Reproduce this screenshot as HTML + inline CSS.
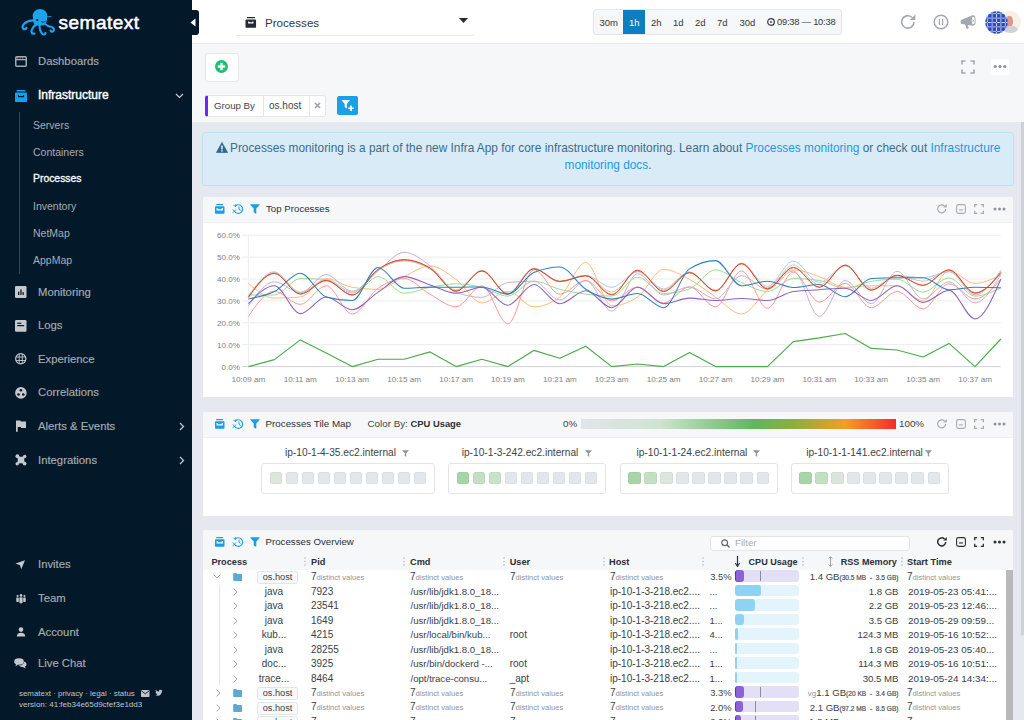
<!DOCTYPE html>
<html><head><meta charset="utf-8">
<style>
*{box-sizing:border-box}
html,body{margin:0;padding:0}
body{width:1024px;height:720px;overflow:hidden;position:relative;font-family:"Liberation Sans",sans-serif;background:#e6e8ef;color:#333}
.a{position:absolute;white-space:nowrap}
#side{position:absolute;left:0;top:0;width:192px;height:720px;background:#03192a}
.ni{position:absolute;left:38px;font-size:11.3px;color:#a8acb2;line-height:14px;-webkit-text-stroke:0.15px currentColor}
.si{position:absolute;left:33px;font-size:10.5px;color:#a8acb2;line-height:14px}
.ic{position:absolute;left:15px}
#hdr{position:absolute;left:192px;top:0;width:832px;height:44px;background:#fff;border-bottom:1px solid #e8eaef}
#tb{position:absolute;left:192px;top:44px;width:832px;height:78px;background:#f6f7f9}
.panel{position:absolute;left:203px;width:810px;background:#fff}
.ph{position:absolute;left:0;top:0;width:100%;height:25px;background:#f5f6f9}
</style></head><body>
<div id="side">
  <svg class="a" style="left:18px;top:7px" width="38" height="30" viewBox="0 0 38 30">
    <g fill="#1ea2ea" stroke="#1ea2ea" stroke-linecap="round" fill-opacity="1">
      <ellipse cx="22" cy="8.8" rx="7.4" ry="6.8" stroke="none"/>
      <path d="M15 10 Q14.5 16 17.5 18.5 L25.5 18.5 Q29.5 16 29 10 Z" stroke="none"/>
      <path d="M16.5 13.5 Q11 13 7 16 Q3.5 19 5 21.5 Q7 23 8.5 21" fill="none" stroke-width="2.2"/>
      <path d="M18.5 17 Q14.5 20 13.5 23.5 Q13 27.5 16.5 26.5" fill="none" stroke-width="2.2"/>
      <path d="M21.5 18 Q21.5 24 24.5 27 Q26.5 28.5 27.5 26" fill="none" stroke-width="2.1"/>
      <path d="M25.5 16 Q30 19.5 33.5 20 Q37 21.5 35.5 24 Q33.5 25.5 32.5 23.5" fill="none" stroke-width="2.1"/>
      <path d="M27 10 L33 9.6" fill="none" stroke-width="0.9"/>
    </g>
    <circle cx="19.3" cy="13" r="1.1" fill="#03192a"/>
    <path d="M23 14.5 Q25 16 27.5 14.5" stroke="#03192a" stroke-width="0.7" fill="none"/>
  </svg>
  <div class="a" style="left:58.5px;top:11px;font-size:19px;font-weight:400;-webkit-text-stroke:0.55px #fff;color:#fff;line-height:24px;letter-spacing:0.5px">sematext</div>

  <!-- dashboards icon -->
  <svg class="a" style="left:15px;top:56px" width="12" height="11" viewBox="0 0 12 11"><rect x="0.75" y="0.75" width="10.5" height="9.5" rx="1" fill="none" stroke="#a6aab0" stroke-width="1.5"/><rect x="0.75" y="3" width="10.5" height="1.3" fill="#a6aab0"/><rect x="2" y="1.3" width="1.2" height="1.2" fill="#a6aab0"/><rect x="4.5" y="1.3" width="1.2" height="1.2" fill="#a6aab0"/><rect x="7" y="1.3" width="1.2" height="1.2" fill="#a6aab0"/></svg>
  <div class="ni" style="top:54px">Dashboards</div>
  <!-- infra icon -->
  <svg class="a" style="left:15px;top:90px" width="12" height="12" viewBox="0 0 12 12"><rect x="1.5" y="0" width="9" height="1.4" rx="0.5" fill="#13a3ee"/><rect x="0" y="2.6" width="12" height="9.4" rx="0.8" fill="#13a3ee"/><path d="M3.5 5 L3.5 6.6 L8.5 6.6 L8.5 5" stroke="#03192a" stroke-width="1.2" fill="none"/></svg>
  <div class="ni" style="top:88px;color:#fff;font-size:12px;-webkit-text-stroke:0.4px #fff">Infrastructure</div>
  <svg class="a" style="left:175px;top:93px" width="9" height="6" viewBox="0 0 9 6"><path d="M1 1 L4.5 4.5 L8 1" stroke="#c8ccd2" stroke-width="1.2" fill="none"/></svg>
  <div class="a" style="left:19px;top:112px;width:1px;height:162px;background:#3a4654"></div>
  <div class="si" style="top:118px">Servers</div>
  <div class="si" style="top:145px">Containers</div>
  <div class="si" style="top:172px;color:#fff;font-size:10.4px;-webkit-text-stroke:0.3px #fff">Processes</div>
  <div class="si" style="top:199px">Inventory</div>
  <div class="si" style="top:226px">NetMap</div>
  <div class="si" style="top:253px">AppMap</div>
  <!-- monitoring -->
  <svg class="a" style="left:15px;top:286px" width="12" height="12" viewBox="0 0 12 12"><rect x="0" y="0" width="11.5" height="12" rx="1.2" fill="#c5c8cd"/><rect x="3" y="5.5" width="1.3" height="3.5" rx="0.6" fill="#03192a"/><rect x="5.3" y="3.3" width="1.3" height="5.7" rx="0.6" fill="#03192a"/><rect x="7.5" y="6" width="1.3" height="3" rx="0.6" fill="#03192a"/></svg>
  <div class="ni" style="top:285px">Monitoring</div>
  <!-- logs -->
  <svg class="a" style="left:15px;top:320px" width="12" height="12" viewBox="0 0 12 12"><rect x="0" y="0" width="11.5" height="11.8" rx="1.2" fill="#c5c8cd"/><rect x="2.3" y="2.7" width="4" height="1.2" fill="#03192a"/><rect x="2.3" y="5" width="6.8" height="1.2" fill="#03192a"/></svg>
  <div class="ni" style="top:318px">Logs</div>
  <!-- experience globe -->
  <svg class="a" style="left:15px;top:353px" width="12" height="12" viewBox="0 0 12 12"><circle cx="5.75" cy="5.75" r="5.1" fill="none" stroke="#c5c8cd" stroke-width="1.2"/><path d="M1 4 H10.5 M1 7.5 H10.5 M4.2 1 V10.5 M7.3 1 V10.5" stroke="#c5c8cd" stroke-width="0.9"/></svg>
  <div class="ni" style="top:352px">Experience</div>
  <!-- correlations -->
  <svg class="a" style="left:15px;top:387px" width="12" height="12" viewBox="0 0 12 12"><circle cx="5.9" cy="5.9" r="5.8" fill="#c5c8cd"/><circle cx="5.9" cy="3.3" r="1.3" fill="#03192a"/><circle cx="3.5" cy="7.5" r="1.3" fill="#03192a"/><circle cx="8.3" cy="7.5" r="1.3" fill="#03192a"/></svg>
  <div class="ni" style="top:385px">Correlations</div>
  <!-- flag -->
  <svg class="a" style="left:15px;top:420px" width="12" height="12" viewBox="0 0 12 12"><path d="M1 0.5 H5.3 L5.8 1.6 H11 V8 H6.3 L5.8 7 H2.7 V11.8 H1 Z" fill="#c5c8cd"/></svg>
  <div class="ni" style="top:419px">Alerts &amp; Events</div>
  <svg class="a" style="left:179px;top:422px" width="6" height="9" viewBox="0 0 6 9"><path d="M1 1 L4.5 4.5 L1 8" stroke="#c8ccd2" stroke-width="1.2" fill="none"/></svg>
  <!-- integrations puzzle -->
  <svg class="a" style="left:15px;top:454px" width="12" height="12" viewBox="0 0 12 12"><rect x="2.6" y="2.6" width="6.8" height="6.8" fill="#c5c8cd"/><circle cx="2.4" cy="2.2" r="1.9" fill="#c5c8cd"/><circle cx="9.7" cy="2.4" r="1.7" fill="#c5c8cd"/><circle cx="2.2" cy="9.8" r="1.7" fill="#c5c8cd"/><circle cx="9.6" cy="9.6" r="1.9" fill="#c5c8cd"/><circle cx="6" cy="1.6" r="1.1" fill="#03192a"/><circle cx="10.6" cy="6" r="1.1" fill="#03192a"/><circle cx="1.4" cy="6" r="1.1" fill="#03192a"/><circle cx="6" cy="10.5" r="1.1" fill="#03192a"/></svg>
  <div class="ni" style="top:453px">Integrations</div>
  <svg class="a" style="left:179px;top:456px" width="6" height="9" viewBox="0 0 6 9"><path d="M1 1 L4.5 4.5 L1 8" stroke="#c8ccd2" stroke-width="1.2" fill="none"/></svg>
  <!-- invites plane -->
  <svg class="a" style="left:15px;top:560px" width="11" height="10" viewBox="0 0 11 10"><path d="M0.5 3.6 L10 0.3 L6.2 9.3 L5 5.2 Z" fill="#c5c8cd"/></svg>
  <div class="ni" style="top:557px">Invites</div>
  <!-- team -->
  <svg class="a" style="left:16px;top:594px" width="10" height="10" viewBox="0 0 10 10"><circle cx="5" cy="1.4" r="1.3" fill="#c5c8cd"/><circle cx="1.6" cy="2" r="1.1" fill="#c5c8cd"/><circle cx="8.4" cy="2" r="1.1" fill="#c5c8cd"/><rect x="3.4" y="3.2" width="3.2" height="6" rx="0.8" fill="#c5c8cd"/><rect x="0.3" y="3.6" width="2.5" height="4.4" rx="0.7" fill="#c5c8cd"/><rect x="7.2" y="3.6" width="2.5" height="4.4" rx="0.7" fill="#c5c8cd"/></svg>
  <div class="ni" style="top:591px">Team</div>
  <!-- account -->
  <svg class="a" style="left:16px;top:627px" width="10" height="10" viewBox="0 0 10 10"><circle cx="5" cy="2.6" r="2.3" fill="#c5c8cd"/><path d="M0.8 9.6 Q0.8 5.8 5 5.8 Q9.2 5.8 9.2 9.6 Z" fill="#c5c8cd"/></svg>
  <div class="ni" style="top:625px">Account</div>
  <!-- chat -->
  <svg class="a" style="left:14px;top:658px" width="13" height="11" viewBox="0 0 13 11"><ellipse cx="5" cy="3.5" rx="4.8" ry="3.3" fill="#c5c8cd"/><path d="M2 6 L1.5 8.2 L4.5 6.5 Z" fill="#c5c8cd"/><path d="M10.3 3.5 Q12.8 4.5 12.6 6.5 Q12.4 8 11 8.5 L11.6 10.3 L8.5 8.9 Q6 9 4.7 7.6 Q9.5 7.4 10.3 3.5 Z" fill="#c5c8cd"/></svg>
  <div class="ni" style="top:656px">Live Chat</div>
  <div class="a" style="left:19px;top:689px;font-size:7.9px;color:#c0c4ca;line-height:10px">sematext · privacy · legal · status</div>
  <svg class="a" style="left:141px;top:690px" width="9" height="7" viewBox="0 0 9 7"><rect x="0" y="0" width="8.5" height="7" rx="0.8" fill="#c0c4ca"/><path d="M0.3 0.8 L4.25 3.8 L8.2 0.8" stroke="#03192a" stroke-width="0.9" fill="none"/></svg>
  <svg class="a" style="left:155px;top:689px" width="8" height="8" viewBox="0 0 24 24"><path fill="#c0c4ca" d="M23 4.6c-.8.4-1.7.6-2.6.7.9-.6 1.6-1.4 2-2.5-.9.5-1.9.9-2.9 1.1C18.6 3 17.4 2.4 16 2.4c-2.5 0-4.5 2-4.5 4.5 0 .4 0 .7.1 1C7.9 7.7 4.6 5.9 2.4 3.2c-.4.7-.6 1.4-.6 2.3 0 1.6.8 2.9 2 3.8-.7 0-1.4-.2-2-.6v.1c0 2.2 1.6 4 3.6 4.4-.4.1-.8.2-1.2.2-.3 0-.6 0-.8-.1.6 1.8 2.2 3.1 4.2 3.1-1.5 1.2-3.5 1.9-5.6 1.9H1c2 1.3 4.4 2 6.9 2 8.3 0 12.8-6.9 12.8-12.8v-.6c.9-.6 1.6-1.4 2.3-2.3z"/></svg>
  <div class="a" style="left:19px;top:700px;font-size:8px;color:#c0c4ca;line-height:10px">version: 41:feb34e65d9cfef3e1dd3</div>
</div>
<div class="a" style="left:186px;top:10px;width:13px;height:25px;background:#03192a;border-radius:0 3px 3px 0;z-index:5"></div>
<svg class="a" style="left:190px;top:18px;z-index:6" width="6" height="9" viewBox="0 0 6 9"><path d="M5.5 0.5 L0.5 4.5 L5.5 8.5 Z" fill="#fff"/></svg>

<div id="hdr">
  <svg class="a" style="left:53px;top:17px" width="12" height="11" viewBox="0 0 12 12"><rect x="1.5" y="0" width="9" height="1.4" rx="0.5" fill="#262a30"/><rect x="0" y="2.6" width="11.5" height="9" rx="0.8" fill="#262a30"/><path d="M3.5 4.8 L3.5 6.4 L8 6.4 L8 4.8" stroke="#fff" stroke-width="1.3" fill="none"/></svg>
  <div class="a" style="left:73px;top:16px;font-size:11.6px;color:#333840;line-height:14px">Processes</div>
  <svg class="a" style="left:267px;top:18px" width="9" height="5" viewBox="0 0 9 5"><path d="M0 0 H9 L4.5 5 Z" fill="#262a30"/></svg>
  <div class="a" style="left:44px;top:34.5px;width:238px;height:1px;background:#e6e8ee"></div>
  <!-- time picker -->
  <div class="a" style="left:401px;top:9px;width:249px;height:26px;border:1px solid #e3e6eb;border-radius:3px;background:#f6f7f9"></div>
  <div class="a" style="left:431px;top:10px;width:22px;height:24px;background:#0d7fc0"></div>
  <div class="a" style="left:407.5px;top:17px;font-size:9.5px;color:#32363c;line-height:11px">30m</div>
  <div class="a" style="left:437px;top:17px;font-size:9.5px;color:#fff;line-height:11px">1h</div>
  <div class="a" style="left:459px;top:17px;font-size:9.5px;color:#32363c;line-height:11px">2h</div>
  <div class="a" style="left:481px;top:17px;font-size:9.5px;color:#32363c;line-height:11px">1d</div>
  <div class="a" style="left:503px;top:17px;font-size:9.5px;color:#32363c;line-height:11px">2d</div>
  <div class="a" style="left:525px;top:17px;font-size:9.5px;color:#32363c;line-height:11px">7d</div>
  <div class="a" style="left:547.5px;top:17px;font-size:9.5px;color:#32363c;line-height:11px">30d</div>
  <svg class="a" style="left:574.8px;top:18.3px" width="8" height="8" viewBox="0 0 8 8"><circle cx="4" cy="4" r="3.3" fill="none" stroke="#32363c" stroke-width="1.2"/><circle cx="4" cy="4" r="0.9" fill="#32363c"/></svg>
  <div class="a" style="left:585px;top:17px;font-size:9.3px;letter-spacing:-0.2px;color:#32363c;line-height:11px">09:38 — 10:38</div>
  <!-- right icons -->
  <svg class="a" style="left:708px;top:14px" width="17" height="16" viewBox="0 0 17 16"><path d="M14 8 A6.2 6.2 0 1 1 11.8 3.2" fill="none" stroke="#a2a7b0" stroke-width="1.6"/><path d="M15.3 0.5 L15.3 6 L9.8 6 Z" fill="#a2a7b0"/></svg>
  <svg class="a" style="left:741px;top:14px" width="16" height="16" viewBox="0 0 16 16"><circle cx="8" cy="8" r="6.8" fill="none" stroke="#a2a7b0" stroke-width="1.4"/><rect x="5.8" y="5" width="1.2" height="6" fill="#a2a7b0"/><rect x="9" y="5" width="1.2" height="6" fill="#a2a7b0"/></svg>
  <svg class="a" style="left:768px;top:14px" width="17" height="16" viewBox="0 0 17 16"><path d="M1.5 5.8 Q0.5 6 0.6 8 Q0.7 9.8 1.7 10 L5 10.6 L6.5 14.3 Q7.2 15.3 8.2 14.6 L8.7 14 L7.7 10.9 L12.8 11.6 L12.8 1.3 Z" fill="#a2a7b0"/><ellipse cx="13" cy="6.45" rx="2.6" ry="5.2" fill="#a2a7b0"/><ellipse cx="13.2" cy="6.45" rx="1.5" ry="3.8" fill="#fff"/><path d="M12.6 5 L14.2 6.45 L12.6 7.9 Z" fill="#a2a7b0"/></svg>
  <!-- avatars -->
  <div class="a" style="left:808px;top:11px;width:21px;height:22px;border-radius:50%;background:#f8f0e6;overflow:hidden">
    <div class="a" style="left:6px;top:5px;width:7px;height:11px;border-radius:45%;background:#d99a8a"></div>
    <div class="a" style="left:3px;top:15px;width:15px;height:10px;border-radius:40% 40% 0 0;background:#cfd2d8"></div>
  </div>
  <svg class="a" style="left:793px;top:11px" width="23" height="23" viewBox="0 0 23 23"><defs><pattern id="pt" x="0.5" y="0.5" width="4.4" height="4.4" patternUnits="userSpaceOnUse"><rect width="4.4" height="4.4" fill="#2b4cb8"/><path d="M0 2.2 H4.4 M2.2 0 V4.4" stroke="#eef2ff" stroke-width="0.75"/><rect x="1.7" y="1.7" width="1" height="1" fill="#2b4cb8"/></pattern></defs><circle cx="11.5" cy="11.5" r="11.2" fill="url(#pt)"/></svg>
</div>
<div id="tb">
  <div class="a" style="left:13px;top:9px;width:34px;height:29px;background:#fff;border:1px solid #e5e7ec;border-radius:3px"></div>
  <svg class="a" style="left:23px;top:16px" width="13" height="13" viewBox="0 0 13 13"><circle cx="6.5" cy="6.5" r="6.5" fill="#1ebe72"/><rect x="2.8" y="5.3" width="7.4" height="2.4" fill="#fff"/><rect x="5.3" y="2.8" width="2.4" height="7.4" fill="#fff"/></svg>
  <div class="a" style="left:12.5px;top:50.5px;width:121.5px;height:22px;background:#fff;border:1px solid #e2e5ea;border-left:3px solid #6a29f5;border-radius:3px"></div>
  <div class="a" style="left:70.5px;top:51.5px;width:1px;height:20px;background:#e2e5ea"></div>
  <div class="a" style="left:116.5px;top:51.5px;width:1px;height:20px;background:#e2e5ea"></div>
  <div class="a" style="left:22px;top:56px;font-size:9.7px;color:#40454c;line-height:11px">Group By</div>
  <div class="a" style="left:77px;top:56px;font-size:10px;color:#40454c;line-height:11px">os.host</div>
  <svg class="a" style="left:122px;top:58px" width="7" height="7" viewBox="0 0 7 7"><path d="M1 1 L6 6 M6 1 L1 6" stroke="#9ba0a8" stroke-width="1.6"/></svg>
  <div class="a" style="left:145px;top:52px;width:21px;height:19px;background:#19a0e6;border-radius:2px"></div>
  <svg class="a" style="left:149px;top:55px" width="14" height="13" viewBox="0 0 14 13"><path d="M0.5 1 H9 L5.8 5 V9.5 L3.7 8 V5 Z" fill="#fff"/><path d="M10 6.5 V12 M7.3 9.25 H12.7" stroke="#fff" stroke-width="1.7"/></svg>
  <svg class="a" style="left:769px;top:16px" width="14" height="14" viewBox="0 0 14 14"><path d="M1 4.5 V1 H4.5 M9.5 1 H13 V4.5 M13 9.5 V13 H9.5 M4.5 13 H1 V9.5" fill="none" stroke="#a2a7b0" stroke-width="1.6"/></svg>
  <div class="a" style="left:799px;top:15px;width:18px;height:16px;background:#fff;border-radius:3px"></div>
  <svg class="a" style="left:801px;top:20px" width="14" height="5" viewBox="0 0 14 5"><circle cx="2.2" cy="2.5" r="1.6" fill="#8d929a"/><circle cx="7" cy="2.5" r="1.6" fill="#8d929a"/><circle cx="11.8" cy="2.5" r="1.6" fill="#8d929a"/></svg>
</div>

<div class="a" style="left:202px;top:132px;width:812px;height:54px;background:#d9ebf7;border:1px solid #c0e1f4;border-radius:3px"></div>
<svg class="a" style="left:216px;top:142px" width="12" height="11" viewBox="0 0 12 11"><path d="M6 0.3 L11.8 10.7 H0.2 Z" fill="#2d6a8e" stroke="#2d6a8e" stroke-width="0.5" stroke-linejoin="round"/><rect x="5.3" y="3.5" width="1.4" height="4" fill="#fff"/><rect x="5.3" y="8.3" width="1.4" height="1.3" fill="#fff"/></svg>
<div class="a" style="left:230px;top:140px;font-size:11.85px;line-height:16px;color:#3d6b8a">Processes monitoring is a part of the new Infra App for core infrastructure monitoring. Learn about <span style="color:#1b9ae0">Processes monitoring</span> or check out <span style="color:#1b9ae0">Infrastructure</span></div>
<div class="a" style="left:408px;width:400px;text-align:center;top:156.5px;font-size:11.85px;line-height:16px;color:#3d6b8a"><span style="color:#1b9ae0">monitoring docs</span>.</div>

<div class="a" style="left:203px;top:197px;width:810px;height:200px;background:#fff"></div>
<div class="a" style="left:203px;top:197px;width:810px;height:26px;background:#f6f7f9;border-bottom:1px solid #eceef1"></div>
<svg class="a" style="left:215px;top:204.4px" width="9.5" height="9.8" viewBox="0 0 9.5 9.8"><rect x="1.2" y="0" width="7" height="1.3" rx="0.5" fill="#1a9fe6"/><rect x="0" y="2.3" width="9.5" height="7.5" rx="0.8" fill="#1a9fe6"/><path d="M2.2 4 V5.9 H7.3 V4" stroke="#fff" stroke-width="1.2" fill="none"/></svg>
<svg class="a" style="left:232px;top:203px" width="12" height="12" viewBox="0 0 12 12"><path d="M3.2 3.2 A4.3 4.3 0 1 1 2.6 8.2" fill="none" stroke="#1a9fe6" stroke-width="1.1"/><path d="M1.5 2.2 L3.6 3.6 L4 1" fill="none" stroke="#1a9fe6" stroke-width="1"/><path d="M7 3.6 V6.3 L8.6 7.4" fill="none" stroke="#1a9fe6" stroke-width="1"/><path d="M0.6 6.4 L4 10 M4 6.4 L0.6 10" stroke="#1a9fe6" stroke-width="0.9"/></svg>
<svg class="a" style="left:250px;top:204px" width="10" height="10" viewBox="0 0 10 10"><path d="M0.8 0.2 H9.2 Q10 0.2 9.6 1 L6.3 4.6 V9.2 Q6.3 9.9 5.6 9.6 L3.9 8.6 Q3.7 8.4 3.7 8 V4.6 L0.4 1 Q0 0.2 0.8 0.2 Z" fill="#1a9fe6"/></svg>
<div class="a" style="left:266px;top:203px;font-size:9.7px;line-height:12px;color:#2b2f36">Top Processes</div>
<svg class="a" style="left:937px;top:204px" width="11" height="10" viewBox="0 0 11 10"><path d="M8.7 5 A4 4 0 1 1 7.5 2" fill="none" stroke="#a6abb3" stroke-width="1.2"/><path d="M9.8 0 V3.6 H6.2 Z" fill="#a6abb3"/></svg>
<svg class="a" style="left:956px;top:204px" width="10" height="10" viewBox="0 0 10 10"><rect x="0.6" y="0.6" width="8.8" height="8.8" rx="1.8" fill="none" stroke="#a6abb3" stroke-width="1.1"/><rect x="3" y="5.4" width="4" height="1.1" fill="#a6abb3"/></svg>
<svg class="a" style="left:974px;top:204px" width="10" height="10" viewBox="0 0 10 10"><path d="M0.7 3.2 V0.7 H3.2 M6.8 0.7 H9.3 V3.2 M9.3 6.8 V9.3 H6.8 M3.2 9.3 H0.7 V6.8" fill="none" stroke="#a6abb3" stroke-width="1.3"/></svg>
<svg class="a" style="left:993px;top:207px" width="13" height="4" viewBox="0 0 13 4"><circle cx="2" cy="2" r="1.5" fill="#8e939b"/><circle cx="6.5" cy="2" r="1.5" fill="#8e939b"/><circle cx="11" cy="2" r="1.5" fill="#8e939b"/></svg>
<svg class="a" style="left:0;top:0;z-index:2" width="1024" height="720" viewBox="0 0 1024 720" font-family="Liberation Sans" font-size="8.1" fill="#7c8087"><line x1="242" y1="366.6" x2="1000.7" y2="366.6" stroke="#cfd1d4" stroke-width="1"/><text x="240" y="369.5" text-anchor="end">0.0%</text><line x1="242" y1="344.7" x2="1000.7" y2="344.7" stroke="#ebecee" stroke-width="1"/><text x="240" y="347.6" text-anchor="end">10.0%</text><line x1="242" y1="322.8" x2="1000.7" y2="322.8" stroke="#ebecee" stroke-width="1"/><text x="240" y="325.7" text-anchor="end">20.0%</text><line x1="242" y1="300.9" x2="1000.7" y2="300.9" stroke="#ebecee" stroke-width="1"/><text x="240" y="303.8" text-anchor="end">30.0%</text><line x1="242" y1="279.0" x2="1000.7" y2="279.0" stroke="#ebecee" stroke-width="1"/><text x="240" y="281.9" text-anchor="end">40.0%</text><line x1="242" y1="257.1" x2="1000.7" y2="257.1" stroke="#ebecee" stroke-width="1"/><text x="240" y="260.0" text-anchor="end">50.0%</text><line x1="242" y1="235.2" x2="1000.7" y2="235.2" stroke="#ebecee" stroke-width="1"/><text x="240" y="238.1" text-anchor="end">60.0%</text><line x1="248.4" y1="235.2" x2="248.4" y2="366.6" stroke="#ebecee" stroke-width="1"/><text x="248.4" y="381.8" text-anchor="middle">10:09 am</text><text x="300.3" y="381.8" text-anchor="middle">10:11 am</text><text x="352.2" y="381.8" text-anchor="middle">10:13 am</text><text x="404.1" y="381.8" text-anchor="middle">10:15 am</text><text x="456.0" y="381.8" text-anchor="middle">10:17 am</text><text x="507.9" y="381.8" text-anchor="middle">10:19 am</text><text x="559.8" y="381.8" text-anchor="middle">10:21 am</text><text x="611.7" y="381.8" text-anchor="middle">10:23 am</text><text x="663.6" y="381.8" text-anchor="middle">10:25 am</text><text x="715.5" y="381.8" text-anchor="middle">10:27 am</text><text x="767.4" y="381.8" text-anchor="middle">10:29 am</text><text x="819.3" y="381.8" text-anchor="middle">10:31 am</text><text x="871.2" y="381.8" text-anchor="middle">10:33 am</text><text x="923.1" y="381.8" text-anchor="middle">10:35 am</text><text x="975.0" y="381.8" text-anchor="middle">10:37 am</text><path d="M248.4,366.6 L274.4,359.6 L300.3,339.9 L326.2,353.0 L352.2,366.6 L378.1,359.2 L404.1,359.2 L430.1,351.9 L456.0,366.6 L481.9,359.2 L507.9,366.6 L533.9,350.4 L559.8,358.3 L585.8,346.2 L611.7,366.6 L637.6,364.0 L663.6,366.6 L689.5,352.4 L715.5,366.6 L741.5,366.6 L767.4,366.6 L793.3,341.6 L819.3,337.9 L845.2,333.5 L871.2,348.4 L897.1,350.0 L923.1,357.0 L949.0,343.4 L975.0,366.6 L1000.9,339.0" fill="none" stroke="#4aab4a" stroke-width="1.15" stroke-linejoin="round"/><path d="M248.4,283.4C257.1,290.7 265.7,298.1 274.4,298.1C283.0,298.1 291.7,297.7 300.3,297.0C308.9,296.2 317.6,278.6 326.2,278.6C334.9,278.6 343.6,286.0 352.2,287.3C360.8,288.6 369.5,289.3 378.1,289.3C386.8,289.3 395.4,280.5 404.1,276.6C412.8,272.7 421.4,265.9 430.1,265.9C438.7,265.9 447.4,273.3 456.0,279.4C464.6,285.6 473.3,302.9 481.9,302.9C490.6,302.9 499.2,291.3 507.9,291.3C516.5,291.3 525.2,306.8 533.9,306.8C542.5,306.8 551.1,303.5 559.8,297.0C568.4,290.4 577.1,262.4 585.8,262.4C594.4,262.4 603.1,305.7 611.7,305.7C620.4,305.7 629.0,302.8 637.6,297.0C646.3,291.1 655.0,269.4 663.6,269.4C672.2,269.4 680.9,274.8 689.5,279.4C698.2,284.0 706.9,291.2 715.5,297.0C724.1,302.7 732.8,314.0 741.5,314.0C750.1,314.0 758.8,297.5 767.4,290.2C776.0,282.8 784.7,269.8 793.3,269.8C802.0,269.8 810.6,273.7 819.3,276.6C827.9,279.5 836.6,287.3 845.2,287.3C853.9,287.3 862.5,285.8 871.2,285.8C879.8,285.8 888.5,285.8 897.1,285.8C905.8,285.8 914.4,300.9 923.1,300.9C931.7,300.9 940.4,270.9 949.0,270.9C957.7,270.9 966.4,283.4 975.0,283.4C983.6,283.4 992.3,279.0 1000.9,274.6" fill="none" stroke="#ffbb78" stroke-width="1.0" stroke-linejoin="round"/><path d="M248.4,295.0C257.1,295.0 265.7,295.0 274.4,295.0C283.0,295.0 291.7,278.6 300.3,278.6C308.9,278.6 317.6,278.9 326.2,279.4C334.9,280.0 343.6,295.0 352.2,295.0C360.8,295.0 369.5,276.6 378.1,276.6C386.8,276.6 395.4,293.2 404.1,293.2C412.8,293.2 421.4,288.9 430.1,287.3C438.7,285.8 447.4,283.8 456.0,283.8C464.6,283.8 473.3,285.3 481.9,287.3C490.6,289.4 499.2,296.1 507.9,296.1C516.5,296.1 525.2,281.2 533.9,281.2C542.5,281.2 551.1,287.1 559.8,289.3C568.4,291.4 577.1,293.0 585.8,294.1C594.4,295.2 603.1,296.1 611.7,296.1C620.4,296.1 629.0,277.2 637.6,277.2C646.3,277.2 655.0,293.5 663.6,293.5C672.2,293.5 680.9,291.9 689.5,288.9C698.2,285.8 706.9,269.8 715.5,269.8C724.1,269.8 732.8,278.9 741.5,282.5C750.1,286.1 758.8,291.5 767.4,291.5C776.0,291.5 784.7,278.6 793.3,278.6C802.0,278.6 810.6,279.2 819.3,280.5C827.9,281.8 836.6,288.2 845.2,288.2C853.9,288.2 862.5,282.9 871.2,281.4C879.8,279.9 888.5,279.2 897.1,279.2C905.8,279.2 914.4,292.1 923.1,292.1C931.7,292.1 940.4,277.9 949.0,277.9C957.7,277.9 966.4,296.1 975.0,296.1C983.6,296.1 992.3,291.9 1000.9,287.8" fill="none" stroke="#98df8a" stroke-width="1.0" stroke-linejoin="round"/><path d="M248.4,305.7C257.1,293.8 265.7,281.8 274.4,281.8C283.0,281.8 291.7,292.8 300.3,292.8C308.9,292.8 317.6,274.6 326.2,274.6C334.9,274.6 343.6,291.3 352.2,291.3C360.8,291.3 369.5,277.4 378.1,270.9C386.8,264.4 395.4,252.3 404.1,252.3C412.8,252.3 421.4,259.2 430.1,265.9C438.7,272.5 447.4,288.6 456.0,292.1C464.6,295.6 473.3,297.4 481.9,297.4C490.6,297.4 499.2,283.4 507.9,282.5C516.5,281.6 525.2,281.2 533.9,281.2C542.5,281.2 551.1,300.0 559.8,300.0C568.4,300.0 577.1,280.5 585.8,280.5C594.4,280.5 603.1,311.0 611.7,311.0C620.4,311.0 629.0,273.7 637.6,273.7C646.3,273.7 655.0,295.0 663.6,295.0C672.2,295.0 680.9,286.9 689.5,286.9C698.2,286.9 706.9,298.9 715.5,298.9C724.1,298.9 732.8,275.7 741.5,275.7C750.1,275.7 758.8,289.3 767.4,289.3C776.0,289.3 784.7,270.9 793.3,270.9C802.0,270.9 810.6,316.4 819.3,316.4C827.9,316.4 836.6,280.5 845.2,280.5C853.9,280.5 862.5,303.7 871.2,303.7C879.8,303.7 888.5,271.3 897.1,271.3C905.8,271.3 914.4,298.9 923.1,298.9C931.7,298.9 940.4,281.8 949.0,281.8C957.7,281.8 966.4,302.9 975.0,302.9C983.6,302.9 992.3,288.7 1000.9,274.6" fill="none" stroke="#c5b0d5" stroke-width="1.0" stroke-linejoin="round"/><path d="M248.4,316.4C257.1,303.9 265.7,291.3 274.4,291.3C283.0,291.3 291.7,304.4 300.3,304.4C308.9,304.4 317.6,285.8 326.2,285.8C334.9,285.8 343.6,314.0 352.2,314.0C360.8,314.0 369.5,294.1 378.1,288.2C386.8,282.3 395.4,278.6 404.1,278.6C412.8,278.6 421.4,289.6 430.1,294.3C438.7,299.0 447.4,306.8 456.0,306.8C464.6,306.8 473.3,285.8 481.9,285.8C490.6,285.8 499.2,323.9 507.9,323.9C516.5,323.9 525.2,269.8 533.9,269.8C542.5,269.8 551.1,294.1 559.8,294.1C568.4,294.1 577.1,280.5 585.8,280.5C594.4,280.5 603.1,300.9 611.7,300.9C620.4,300.9 629.0,286.9 637.6,286.9C646.3,286.9 655.0,302.9 663.6,302.9C672.2,302.9 680.9,286.9 689.5,286.9C698.2,286.9 706.9,306.8 715.5,306.8C724.1,306.8 732.8,270.9 741.5,270.9C750.1,270.9 758.8,308.3 767.4,308.3C776.0,308.3 784.7,272.2 793.3,272.2C802.0,272.2 810.6,302.0 819.3,302.0C827.9,302.0 836.6,283.4 845.2,283.4C853.9,283.4 862.5,307.7 871.2,307.7C879.8,307.7 888.5,291.5 897.1,291.5C905.8,291.5 914.4,308.8 923.1,308.8C931.7,308.8 940.4,283.8 949.0,283.8C957.7,283.8 966.4,298.9 975.0,298.9C983.6,298.9 992.3,289.0 1000.9,279.0" fill="none" stroke="#ff9896" stroke-width="1.0" stroke-linejoin="round"/><path d="M248.4,296.1C257.1,283.9 265.7,271.8 274.4,271.8C283.0,271.8 291.7,293.2 300.3,293.2C308.9,293.2 317.6,279.4 326.2,279.4C334.9,279.4 343.6,292.1 352.2,292.1C360.8,292.1 369.5,275.0 378.1,269.8C386.8,264.6 395.4,261.0 404.1,261.0C412.8,261.0 421.4,264.3 430.1,269.1C438.7,274.0 447.4,290.0 456.0,290.0C464.6,290.0 473.3,270.2 481.9,270.2C490.6,270.2 499.2,293.2 507.9,293.2C516.5,293.2 525.2,268.1 533.9,268.1C542.5,268.1 551.1,281.2 559.8,281.2C568.4,281.2 577.1,275.3 585.8,275.3C594.4,275.3 603.1,287.3 611.7,287.3C620.4,287.3 629.0,271.8 637.6,271.8C646.3,271.8 655.0,288.9 663.6,288.9C672.2,288.9 680.9,271.8 689.5,271.8C698.2,271.8 706.9,290.2 715.5,290.2C724.1,290.2 732.8,263.0 741.5,263.0C750.1,263.0 758.8,286.4 767.4,286.4C776.0,286.4 784.7,261.0 793.3,261.0C802.0,261.0 810.6,282.5 819.3,282.5C827.9,282.5 836.6,265.9 845.2,265.9C853.9,265.9 862.5,288.2 871.2,288.2C879.8,288.2 888.5,275.7 897.1,275.7C905.8,275.7 914.4,277.7 923.1,277.7C931.7,277.7 940.4,271.8 949.0,271.8C957.7,271.8 966.4,295.0 975.0,295.0C983.6,295.0 992.3,282.6 1000.9,270.2" fill="none" stroke="#aec7e8" stroke-width="1.0" stroke-linejoin="round"/><path d="M248.4,297.6C257.1,285.0 265.7,272.4 274.4,272.4C283.0,272.4 291.7,292.1 300.3,292.1C308.9,292.1 317.6,280.1 326.2,280.1C334.9,280.1 343.6,293.2 352.2,293.2C360.8,293.2 369.5,275.7 378.1,270.2C386.8,264.8 395.4,260.4 404.1,260.4C412.8,260.4 421.4,263.5 430.1,268.5C438.7,273.5 447.4,290.6 456.0,290.6C464.6,290.6 473.3,270.5 481.9,270.5C490.6,270.5 499.2,293.7 507.9,293.7C516.5,293.7 525.2,268.5 533.9,268.5C542.5,268.5 551.1,281.8 559.8,281.8C568.4,281.8 577.1,275.5 585.8,275.5C594.4,275.5 603.1,292.1 611.7,292.1C620.4,292.1 629.0,271.1 637.6,271.1C646.3,271.1 655.0,290.2 663.6,290.2C672.2,290.2 680.9,272.4 689.5,272.4C698.2,272.4 706.9,290.4 715.5,290.4C724.1,290.4 732.8,263.5 741.5,263.5C750.1,263.5 758.8,287.8 767.4,287.8C776.0,287.8 784.7,264.8 793.3,264.8C802.0,264.8 810.6,284.9 819.3,284.9C827.9,284.9 836.6,265.4 845.2,265.4C853.9,265.4 862.5,289.3 871.2,289.3C879.8,289.3 888.5,275.5 897.1,275.5C905.8,275.5 914.4,281.2 923.1,281.2C931.7,281.2 940.4,270.9 949.0,270.9C957.7,270.9 966.4,294.3 975.0,294.3C983.6,294.3 992.3,282.8 1000.9,271.3" fill="none" stroke="#c7c7c7" stroke-width="1.0" stroke-linejoin="round"/><path d="M248.4,303.7C257.1,294.8 265.7,285.8 274.4,285.8C283.0,285.8 291.7,313.6 300.3,313.6C308.9,313.6 317.6,297.0 326.2,297.0C334.9,297.0 343.6,309.7 352.2,309.7C360.8,309.7 369.5,297.7 378.1,292.1C386.8,286.6 395.4,276.6 404.1,276.6C412.8,276.6 421.4,282.1 430.1,284.9C438.7,287.7 447.4,293.2 456.0,293.2C464.6,293.2 473.3,287.3 481.9,287.3C490.6,287.3 499.2,305.3 507.9,305.3C516.5,305.3 525.2,284.5 533.9,284.5C542.5,284.5 551.1,303.7 559.8,303.7C568.4,303.7 577.1,290.8 585.8,290.8C594.4,290.8 603.1,307.7 611.7,307.7C620.4,307.7 629.0,287.3 637.6,287.3C646.3,287.3 655.0,303.7 663.6,303.7C672.2,303.7 680.9,298.1 689.5,298.1C698.2,298.1 706.9,300.5 715.5,300.5C724.1,300.5 732.8,298.5 741.5,298.5C750.1,298.5 758.8,300.5 767.4,300.5C776.0,300.5 784.7,292.7 793.3,291.5C802.0,290.3 810.6,290.3 819.3,289.7C827.9,289.2 836.6,288.2 845.2,288.2C853.9,288.2 862.5,300.5 871.2,300.5C879.8,300.5 888.5,285.8 897.1,285.8C905.8,285.8 914.4,302.4 923.1,302.4C931.7,302.4 940.4,290.2 949.0,290.2C957.7,290.2 966.4,318.9 975.0,318.9C983.6,318.9 992.3,298.9 1000.9,279.0" fill="none" stroke="#8e62c0" stroke-width="1.05" stroke-linejoin="round"/><path d="M248.4,297.4C257.1,285.5 265.7,273.5 274.4,273.5C283.0,273.5 291.7,293.9 300.3,293.9C308.9,293.9 317.6,280.8 326.2,280.8C334.9,280.8 343.6,294.8 352.2,294.8C360.8,294.8 369.5,275.4 378.1,269.6C386.8,263.8 395.4,259.9 404.1,259.9C412.8,259.9 421.4,263.1 430.1,268.3C438.7,273.5 447.4,291.0 456.0,291.0C464.6,291.0 473.3,271.1 481.9,271.1C490.6,271.1 499.2,293.9 507.9,293.9C516.5,293.9 525.2,269.1 533.9,269.1C542.5,269.1 551.1,281.6 559.8,281.6C568.4,281.6 577.1,275.9 585.8,275.9C594.4,275.9 603.1,294.5 611.7,294.5C620.4,294.5 629.0,270.7 637.6,270.7C646.3,270.7 655.0,291.3 663.6,291.3C672.2,291.3 680.9,272.9 689.5,272.9C698.2,272.9 706.9,291.0 715.5,291.0C724.1,291.0 732.8,263.9 741.5,263.9C750.1,263.9 758.8,288.6 767.4,288.6C776.0,288.6 784.7,267.6 793.3,267.6C802.0,267.6 810.6,287.1 819.3,287.1C827.9,287.1 836.6,265.4 845.2,265.4C853.9,265.4 862.5,290.0 871.2,290.0C879.8,290.0 888.5,275.5 897.1,275.5C905.8,275.5 914.4,285.1 923.1,285.1C931.7,285.1 940.4,270.0 949.0,270.0C957.7,270.0 966.4,292.6 975.0,292.6C983.6,292.6 992.3,282.9 1000.9,273.3" fill="none" stroke="#ff7f0e" stroke-width="0.7" stroke-linejoin="round"/><path d="M248.4,297.0C257.1,285.1 265.7,273.3 274.4,273.3C283.0,273.3 291.7,294.1 300.3,294.1C308.9,294.1 317.6,280.5 326.2,280.5C334.9,280.5 343.6,295.0 352.2,295.0C360.8,295.0 369.5,275.2 378.1,269.4C386.8,263.5 395.4,259.7 404.1,259.7C412.8,259.7 421.4,262.8 430.1,268.1C438.7,273.3 447.4,291.3 456.0,291.3C464.6,291.3 473.3,270.9 481.9,270.9C490.6,270.9 499.2,294.1 507.9,294.1C516.5,294.1 525.2,268.9 533.9,268.9C542.5,268.9 551.1,281.4 559.8,281.4C568.4,281.4 577.1,275.7 585.8,275.7C594.4,275.7 603.1,294.8 611.7,294.8C620.4,294.8 629.0,270.2 637.6,270.2C646.3,270.2 655.0,291.5 663.6,291.5C672.2,291.5 680.9,272.6 689.5,272.6C698.2,272.6 706.9,290.8 715.5,290.8C724.1,290.8 732.8,263.7 741.5,263.7C750.1,263.7 758.8,288.9 767.4,288.9C776.0,288.9 784.7,267.4 793.3,267.4C802.0,267.4 810.6,287.3 819.3,287.3C827.9,287.3 836.6,265.0 845.2,265.0C853.9,265.0 862.5,290.2 871.2,290.2C879.8,290.2 888.5,275.3 897.1,275.3C905.8,275.3 914.4,285.4 923.1,285.4C931.7,285.4 940.4,269.8 949.0,269.8C957.7,269.8 966.4,293.2 975.0,293.2C983.6,293.2 992.3,282.8 1000.9,272.4" fill="none" stroke="#e0402a" stroke-width="1.0" stroke-linejoin="round"/><path d="M248.4,298.9C257.1,297.3 265.7,295.8 274.4,291.5C283.0,287.2 291.7,273.3 300.3,273.3C308.9,273.3 317.6,294.6 326.2,297.0C334.9,299.3 343.6,300.5 352.2,300.5C360.8,300.5 369.5,267.4 378.1,267.4C386.8,267.4 395.4,288.2 404.1,288.2C412.8,288.2 421.4,287.1 430.1,287.1C438.7,287.1 447.4,287.3 456.0,287.3C464.6,287.3 473.3,286.9 481.9,286.9C490.6,286.9 499.2,294.1 507.9,294.1C516.5,294.1 525.2,276.4 533.9,272.6C542.5,268.9 551.1,267.0 559.8,267.0C568.4,267.0 577.1,283.9 585.8,289.3C594.4,294.7 603.1,299.1 611.7,299.1C620.4,299.1 629.0,293.5 637.6,293.5C646.3,293.5 655.0,307.7 663.6,307.7C672.2,307.7 680.9,274.5 689.5,268.9C698.2,263.4 706.9,260.6 715.5,260.6C724.1,260.6 732.8,285.8 741.5,285.8C750.1,285.8 758.8,281.2 767.4,281.2C776.0,281.2 784.7,287.5 793.3,287.5C802.0,287.5 810.6,284.5 819.3,284.5C827.9,284.5 836.6,296.7 845.2,296.7C853.9,296.7 862.5,279.1 871.2,278.6C879.8,278.0 888.5,277.7 897.1,277.7C905.8,277.7 914.4,277.7 923.1,277.7C931.7,277.7 940.4,289.7 949.0,289.7C957.7,289.7 966.4,287.3 975.0,287.3C983.6,287.3 992.3,287.5 1000.9,287.8" fill="none" stroke="#2f80bf" stroke-width="1.05" stroke-linejoin="round"/></svg>
<div class="a" style="left:203px;top:412px;width:810px;height:104px;background:#fff"></div>
<div class="a" style="left:203px;top:412px;width:810px;height:26px;background:#f6f7f9;border-bottom:1px solid #eceef1"></div>
<svg class="a" style="left:215px;top:419.4px" width="9.5" height="9.8" viewBox="0 0 9.5 9.8"><rect x="1.2" y="0" width="7" height="1.3" rx="0.5" fill="#1a9fe6"/><rect x="0" y="2.3" width="9.5" height="7.5" rx="0.8" fill="#1a9fe6"/><path d="M2.2 4 V5.9 H7.3 V4" stroke="#fff" stroke-width="1.2" fill="none"/></svg>
<svg class="a" style="left:232px;top:418px" width="12" height="12" viewBox="0 0 12 12"><path d="M3.2 3.2 A4.3 4.3 0 1 1 2.6 8.2" fill="none" stroke="#1a9fe6" stroke-width="1.1"/><path d="M1.5 2.2 L3.6 3.6 L4 1" fill="none" stroke="#1a9fe6" stroke-width="1"/><path d="M7 3.6 V6.3 L8.6 7.4" fill="none" stroke="#1a9fe6" stroke-width="1"/><path d="M0.6 6.4 L4 10 M4 6.4 L0.6 10" stroke="#1a9fe6" stroke-width="0.9"/></svg>
<svg class="a" style="left:250px;top:419px" width="10" height="10" viewBox="0 0 10 10"><path d="M0.8 0.2 H9.2 Q10 0.2 9.6 1 L6.3 4.6 V9.2 Q6.3 9.9 5.6 9.6 L3.9 8.6 Q3.7 8.4 3.7 8 V4.6 L0.4 1 Q0 0.2 0.8 0.2 Z" fill="#1a9fe6"/></svg>
<div class="a" style="left:265.5px;top:418px;font-size:9.8px;line-height:12px;color:#2b2f36">Processes Tile Map</div>
<div class="a" style="left:367.5px;top:418px;font-size:9.8px;line-height:12px;color:#40444b">Color By: <b style="color:#2b2f36;font-size:9.4px">CPU Usage</b></div>
<div class="a" style="left:563px;top:418px;font-size:9.8px;line-height:12px;color:#40444b">0%</div>
<div class="a" style="left:581px;top:419px;width:315px;height:10px;background:linear-gradient(90deg,#e1e5ea 0%,#cfe3cf 25%,#5fb65f 55%,#8fae3c 68%,#f59d23 84%,#f42b2b 100%)"></div>
<div class="a" style="left:899px;top:418px;font-size:9.8px;line-height:12px;color:#40444b">100%</div>
<svg class="a" style="left:937px;top:419px" width="11" height="10" viewBox="0 0 11 10"><path d="M8.7 5 A4 4 0 1 1 7.5 2" fill="none" stroke="#a6abb3" stroke-width="1.2"/><path d="M9.8 0 V3.6 H6.2 Z" fill="#a6abb3"/></svg>
<svg class="a" style="left:956px;top:419px" width="10" height="10" viewBox="0 0 10 10"><rect x="0.6" y="0.6" width="8.8" height="8.8" rx="1.8" fill="none" stroke="#a6abb3" stroke-width="1.1"/><rect x="3" y="5.4" width="4" height="1.1" fill="#a6abb3"/></svg>
<svg class="a" style="left:974px;top:419px" width="10" height="10" viewBox="0 0 10 10"><path d="M0.7 3.2 V0.7 H3.2 M6.8 0.7 H9.3 V3.2 M9.3 6.8 V9.3 H6.8 M3.2 9.3 H0.7 V6.8" fill="none" stroke="#a6abb3" stroke-width="1.3"/></svg>
<svg class="a" style="left:993px;top:422px" width="13" height="4" viewBox="0 0 13 4"><circle cx="2" cy="2" r="1.5" fill="#8e939b"/><circle cx="6.5" cy="2" r="1.5" fill="#8e939b"/><circle cx="11" cy="2" r="1.5" fill="#8e939b"/></svg>
<div class="a" style="left:261px;top:463px;width:174px;height:30.5px;border:1px solid #e2e4e8;border-radius:3px;background:#fff"></div>
<div class="a" style="left:285px;top:446px;font-size:10.2px;line-height:13px;color:#3e4249">ip-10-1-4-35.ec2.internal</div>
<svg class="a" style="left:402.3px;top:449.5px" width="7" height="7" viewBox="0 0 7 7"><path d="M0 0.2 H7 L4.2 3.2 V6.8 L2.8 5.9 V3.2 Z" fill="#8f949b"/></svg>
<div class="a" style="left:269.8px;top:472px;width:12.3px;height:12.3px;border-radius:2.5px;background:#dde5df;box-shadow:inset 0 0 0 0.6px rgba(0,0,0,0.06)"></div>
<div class="a" style="left:285.8px;top:472px;width:12.3px;height:12.3px;border-radius:2.5px;background:#e3e6ea;box-shadow:inset 0 0 0 0.6px rgba(0,0,0,0.06)"></div>
<div class="a" style="left:301.8px;top:472px;width:12.3px;height:12.3px;border-radius:2.5px;background:#e3e6ea;box-shadow:inset 0 0 0 0.6px rgba(0,0,0,0.06)"></div>
<div class="a" style="left:317.9px;top:472px;width:12.3px;height:12.3px;border-radius:2.5px;background:#e3e6ea;box-shadow:inset 0 0 0 0.6px rgba(0,0,0,0.06)"></div>
<div class="a" style="left:333.9px;top:472px;width:12.3px;height:12.3px;border-radius:2.5px;background:#e3e6ea;box-shadow:inset 0 0 0 0.6px rgba(0,0,0,0.06)"></div>
<div class="a" style="left:349.9px;top:472px;width:12.3px;height:12.3px;border-radius:2.5px;background:#e3e6ea;box-shadow:inset 0 0 0 0.6px rgba(0,0,0,0.06)"></div>
<div class="a" style="left:365.9px;top:472px;width:12.3px;height:12.3px;border-radius:2.5px;background:#e3e6ea;box-shadow:inset 0 0 0 0.6px rgba(0,0,0,0.06)"></div>
<div class="a" style="left:381.9px;top:472px;width:12.3px;height:12.3px;border-radius:2.5px;background:#e3e6ea;box-shadow:inset 0 0 0 0.6px rgba(0,0,0,0.06)"></div>
<div class="a" style="left:398.0px;top:472px;width:12.3px;height:12.3px;border-radius:2.5px;background:#e3e6ea;box-shadow:inset 0 0 0 0.6px rgba(0,0,0,0.06)"></div>
<div class="a" style="left:414.0px;top:472px;width:12.3px;height:12.3px;border-radius:2.5px;background:#e3e6ea;box-shadow:inset 0 0 0 0.6px rgba(0,0,0,0.06)"></div>
<div class="a" style="left:448px;top:463px;width:158px;height:30.5px;border:1px solid #e2e4e8;border-radius:3px;background:#fff"></div>
<div class="a" style="left:461.7px;top:446px;font-size:10.2px;line-height:13px;color:#3e4249">ip-10-1-3-242.ec2.internal</div>
<svg class="a" style="left:584.7px;top:449.5px" width="7" height="7" viewBox="0 0 7 7"><path d="M0 0.2 H7 L4.2 3.2 V6.8 L2.8 5.9 V3.2 Z" fill="#8f949b"/></svg>
<div class="a" style="left:456.8px;top:472px;width:12.3px;height:12.3px;border-radius:2.5px;background:#a8d5a8;box-shadow:inset 0 0 0 0.6px rgba(0,0,0,0.06)"></div>
<div class="a" style="left:472.8px;top:472px;width:12.3px;height:12.3px;border-radius:2.5px;background:#c3e0c3;box-shadow:inset 0 0 0 0.6px rgba(0,0,0,0.06)"></div>
<div class="a" style="left:488.8px;top:472px;width:12.3px;height:12.3px;border-radius:2.5px;background:#c8e2c8;box-shadow:inset 0 0 0 0.6px rgba(0,0,0,0.06)"></div>
<div class="a" style="left:504.9px;top:472px;width:12.3px;height:12.3px;border-radius:2.5px;background:#e3e6ea;box-shadow:inset 0 0 0 0.6px rgba(0,0,0,0.06)"></div>
<div class="a" style="left:520.9px;top:472px;width:12.3px;height:12.3px;border-radius:2.5px;background:#e3e6ea;box-shadow:inset 0 0 0 0.6px rgba(0,0,0,0.06)"></div>
<div class="a" style="left:536.9px;top:472px;width:12.3px;height:12.3px;border-radius:2.5px;background:#e3e6ea;box-shadow:inset 0 0 0 0.6px rgba(0,0,0,0.06)"></div>
<div class="a" style="left:552.9px;top:472px;width:12.3px;height:12.3px;border-radius:2.5px;background:#e3e6ea;box-shadow:inset 0 0 0 0.6px rgba(0,0,0,0.06)"></div>
<div class="a" style="left:568.9px;top:472px;width:12.3px;height:12.3px;border-radius:2.5px;background:#e3e6ea;box-shadow:inset 0 0 0 0.6px rgba(0,0,0,0.06)"></div>
<div class="a" style="left:585.0px;top:472px;width:12.3px;height:12.3px;border-radius:2.5px;background:#e3e6ea;box-shadow:inset 0 0 0 0.6px rgba(0,0,0,0.06)"></div>
<div class="a" style="left:619.5px;top:463px;width:158px;height:30.5px;border:1px solid #e2e4e8;border-radius:3px;background:#fff"></div>
<div class="a" style="left:636.4px;top:446px;font-size:10.2px;line-height:13px;color:#3e4249">ip-10-1-1-24.ec2.internal</div>
<svg class="a" style="left:752.8px;top:449.5px" width="7" height="7" viewBox="0 0 7 7"><path d="M0 0.2 H7 L4.2 3.2 V6.8 L2.8 5.9 V3.2 Z" fill="#8f949b"/></svg>
<div class="a" style="left:628.3px;top:472px;width:12.3px;height:12.3px;border-radius:2.5px;background:#a8d5a8;box-shadow:inset 0 0 0 0.6px rgba(0,0,0,0.06)"></div>
<div class="a" style="left:644.3px;top:472px;width:12.3px;height:12.3px;border-radius:2.5px;background:#c3e0c3;box-shadow:inset 0 0 0 0.6px rgba(0,0,0,0.06)"></div>
<div class="a" style="left:660.3px;top:472px;width:12.3px;height:12.3px;border-radius:2.5px;background:#dde5df;box-shadow:inset 0 0 0 0.6px rgba(0,0,0,0.06)"></div>
<div class="a" style="left:676.4px;top:472px;width:12.3px;height:12.3px;border-radius:2.5px;background:#e3e6ea;box-shadow:inset 0 0 0 0.6px rgba(0,0,0,0.06)"></div>
<div class="a" style="left:692.4px;top:472px;width:12.3px;height:12.3px;border-radius:2.5px;background:#e3e6ea;box-shadow:inset 0 0 0 0.6px rgba(0,0,0,0.06)"></div>
<div class="a" style="left:708.4px;top:472px;width:12.3px;height:12.3px;border-radius:2.5px;background:#e3e6ea;box-shadow:inset 0 0 0 0.6px rgba(0,0,0,0.06)"></div>
<div class="a" style="left:724.4px;top:472px;width:12.3px;height:12.3px;border-radius:2.5px;background:#e3e6ea;box-shadow:inset 0 0 0 0.6px rgba(0,0,0,0.06)"></div>
<div class="a" style="left:740.4px;top:472px;width:12.3px;height:12.3px;border-radius:2.5px;background:#e3e6ea;box-shadow:inset 0 0 0 0.6px rgba(0,0,0,0.06)"></div>
<div class="a" style="left:756.5px;top:472px;width:12.3px;height:12.3px;border-radius:2.5px;background:#e3e6ea;box-shadow:inset 0 0 0 0.6px rgba(0,0,0,0.06)"></div>
<div class="a" style="left:790.5px;top:463px;width:158px;height:30.5px;border:1px solid #e2e4e8;border-radius:3px;background:#fff"></div>
<div class="a" style="left:806.2px;top:446px;font-size:10.2px;line-height:13px;color:#3e4249">ip-10-1-1-141.ec2.internal</div>
<svg class="a" style="left:924.8px;top:449.5px" width="7" height="7" viewBox="0 0 7 7"><path d="M0 0.2 H7 L4.2 3.2 V6.8 L2.8 5.9 V3.2 Z" fill="#8f949b"/></svg>
<div class="a" style="left:799.3px;top:472px;width:12.3px;height:12.3px;border-radius:2.5px;background:#a8d5a8;box-shadow:inset 0 0 0 0.6px rgba(0,0,0,0.06)"></div>
<div class="a" style="left:815.3px;top:472px;width:12.3px;height:12.3px;border-radius:2.5px;background:#c3e0c3;box-shadow:inset 0 0 0 0.6px rgba(0,0,0,0.06)"></div>
<div class="a" style="left:831.3px;top:472px;width:12.3px;height:12.3px;border-radius:2.5px;background:#dbe4dd;box-shadow:inset 0 0 0 0.6px rgba(0,0,0,0.06)"></div>
<div class="a" style="left:847.4px;top:472px;width:12.3px;height:12.3px;border-radius:2.5px;background:#e3e6ea;box-shadow:inset 0 0 0 0.6px rgba(0,0,0,0.06)"></div>
<div class="a" style="left:863.4px;top:472px;width:12.3px;height:12.3px;border-radius:2.5px;background:#e3e6ea;box-shadow:inset 0 0 0 0.6px rgba(0,0,0,0.06)"></div>
<div class="a" style="left:879.4px;top:472px;width:12.3px;height:12.3px;border-radius:2.5px;background:#e3e6ea;box-shadow:inset 0 0 0 0.6px rgba(0,0,0,0.06)"></div>
<div class="a" style="left:895.4px;top:472px;width:12.3px;height:12.3px;border-radius:2.5px;background:#e3e6ea;box-shadow:inset 0 0 0 0.6px rgba(0,0,0,0.06)"></div>
<div class="a" style="left:911.4px;top:472px;width:12.3px;height:12.3px;border-radius:2.5px;background:#e3e6ea;box-shadow:inset 0 0 0 0.6px rgba(0,0,0,0.06)"></div>
<div class="a" style="left:927.5px;top:472px;width:12.3px;height:12.3px;border-radius:2.5px;background:#e3e6ea;box-shadow:inset 0 0 0 0.6px rgba(0,0,0,0.06)"></div>
<!--FILTERICONS-->
<div class="a" style="left:203px;top:530px;width:810px;height:190px;background:#fff"></div>
<div class="a" style="left:203px;top:530px;width:810px;height:40px;background:#f6f7f9"></div>
<svg class="a" style="left:215px;top:537.4px" width="9.5" height="9.8" viewBox="0 0 9.5 9.8"><rect x="1.2" y="0" width="7" height="1.3" rx="0.5" fill="#1a9fe6"/><rect x="0" y="2.3" width="9.5" height="7.5" rx="0.8" fill="#1a9fe6"/><path d="M2.2 4 V5.9 H7.3 V4" stroke="#fff" stroke-width="1.2" fill="none"/></svg>
<svg class="a" style="left:232px;top:536px" width="12" height="12" viewBox="0 0 12 12"><path d="M3.2 3.2 A4.3 4.3 0 1 1 2.6 8.2" fill="none" stroke="#1a9fe6" stroke-width="1.1"/><path d="M1.5 2.2 L3.6 3.6 L4 1" fill="none" stroke="#1a9fe6" stroke-width="1"/><path d="M7 3.6 V6.3 L8.6 7.4" fill="none" stroke="#1a9fe6" stroke-width="1"/><path d="M0.6 6.4 L4 10 M4 6.4 L0.6 10" stroke="#1a9fe6" stroke-width="0.9"/></svg>
<svg class="a" style="left:250px;top:537px" width="10" height="10" viewBox="0 0 10 10"><path d="M0.8 0.2 H9.2 Q10 0.2 9.6 1 L6.3 4.6 V9.2 Q6.3 9.9 5.6 9.6 L3.9 8.6 Q3.7 8.4 3.7 8 V4.6 L0.4 1 Q0 0.2 0.8 0.2 Z" fill="#1a9fe6"/></svg>
<div class="a" style="left:265.5px;top:536px;font-size:9.7px;line-height:12px;color:#2b2f36">Processes Overview</div>
<div class="a" style="left:710px;top:536px;width:200px;height:15px;border:1px solid #e2e4e8;border-radius:3px;background:#fff"></div>
<svg class="a" style="left:721px;top:539px" width="9" height="9" viewBox="0 0 9 9"><circle cx="3.7" cy="3.7" r="2.9" fill="none" stroke="#5d636b" stroke-width="1.2"/><path d="M5.8 5.8 L8.5 8.5" stroke="#5d636b" stroke-width="1.3"/></svg>
<div class="a" style="left:735px;top:537px;font-size:9.7px;line-height:12px;color:#a9adb3">Filter</div>
<svg class="a" style="left:937px;top:537px" width="11" height="10" viewBox="0 0 11 10"><path d="M8.7 5 A4 4 0 1 1 7.5 2" fill="none" stroke="#2b2f36" stroke-width="1.5"/><path d="M9.8 0 V3.6 H6.2 Z" fill="#2b2f36"/></svg>
<svg class="a" style="left:956px;top:537px" width="10" height="10" viewBox="0 0 10 10"><rect x="0.6" y="0.6" width="8.8" height="8.8" rx="1.8" fill="none" stroke="#2b2f36" stroke-width="1.1"/><rect x="3" y="5.4" width="4" height="1.1" fill="#2b2f36"/></svg>
<svg class="a" style="left:974px;top:537px" width="10" height="10" viewBox="0 0 10 10"><path d="M0.7 3.2 V0.7 H3.2 M6.8 0.7 H9.3 V3.2 M9.3 6.8 V9.3 H6.8 M3.2 9.3 H0.7 V6.8" fill="none" stroke="#2b2f36" stroke-width="1.3"/></svg>
<svg class="a" style="left:993px;top:540px" width="13" height="4" viewBox="0 0 13 4"><circle cx="2" cy="2" r="1.5" fill="#2b2f36"/><circle cx="6.5" cy="2" r="1.5" fill="#2b2f36"/><circle cx="11" cy="2" r="1.5" fill="#2b2f36"/></svg>
<div class="a" style="left:211.4px;top:555.6px;font-size:9.2px;font-weight:700;line-height:12px;color:#2b2f36">Process</div>
<div class="a" style="left:311px;top:555.6px;font-size:9.2px;font-weight:700;line-height:12px;color:#2b2f36">Pid</div>
<div class="a" style="left:410px;top:555.6px;font-size:9.2px;font-weight:700;line-height:12px;color:#2b2f36">Cmd</div>
<div class="a" style="left:509.7px;top:555.6px;font-size:9.2px;font-weight:700;line-height:12px;color:#2b2f36">User</div>
<div class="a" style="left:609px;top:555.6px;font-size:9.2px;font-weight:700;line-height:12px;color:#2b2f36">Host</div>
<div class="a" style="left:748.5px;top:555.6px;font-size:9.1px;font-weight:700;line-height:12px;color:#2b2f36">CPU Usage</div>
<div class="a" style="left:840.7px;top:555.6px;font-size:9.1px;font-weight:700;line-height:12px;color:#2b2f36">RSS Memory</div>
<div class="a" style="left:907px;top:555.6px;font-size:9.2px;font-weight:700;line-height:12px;color:#2b2f36">Start Time</div>
<svg class="a" style="left:304.3px;top:557px" width="2" height="9" viewBox="0 0 2 9"><circle cx="1" cy="1" r="0.7" fill="#a5a9b0"/><circle cx="1" cy="4.5" r="0.7" fill="#a5a9b0"/><circle cx="1" cy="8" r="0.7" fill="#a5a9b0"/></svg>
<svg class="a" style="left:403.3px;top:557px" width="2" height="9" viewBox="0 0 2 9"><circle cx="1" cy="1" r="0.7" fill="#a5a9b0"/><circle cx="1" cy="4.5" r="0.7" fill="#a5a9b0"/><circle cx="1" cy="8" r="0.7" fill="#a5a9b0"/></svg>
<svg class="a" style="left:503px;top:557px" width="2" height="9" viewBox="0 0 2 9"><circle cx="1" cy="1" r="0.7" fill="#a5a9b0"/><circle cx="1" cy="4.5" r="0.7" fill="#a5a9b0"/><circle cx="1" cy="8" r="0.7" fill="#a5a9b0"/></svg>
<svg class="a" style="left:602.5px;top:557px" width="2" height="9" viewBox="0 0 2 9"><circle cx="1" cy="1" r="0.7" fill="#a5a9b0"/><circle cx="1" cy="4.5" r="0.7" fill="#a5a9b0"/><circle cx="1" cy="8" r="0.7" fill="#a5a9b0"/></svg>
<svg class="a" style="left:702px;top:557px" width="2" height="9" viewBox="0 0 2 9"><circle cx="1" cy="1" r="0.7" fill="#a5a9b0"/><circle cx="1" cy="4.5" r="0.7" fill="#a5a9b0"/><circle cx="1" cy="8" r="0.7" fill="#a5a9b0"/></svg>
<svg class="a" style="left:802.3px;top:557px" width="2" height="9" viewBox="0 0 2 9"><circle cx="1" cy="1" r="0.7" fill="#a5a9b0"/><circle cx="1" cy="4.5" r="0.7" fill="#a5a9b0"/><circle cx="1" cy="8" r="0.7" fill="#a5a9b0"/></svg>
<svg class="a" style="left:901px;top:557px" width="2" height="9" viewBox="0 0 2 9"><circle cx="1" cy="1" r="0.7" fill="#a5a9b0"/><circle cx="1" cy="4.5" r="0.7" fill="#a5a9b0"/><circle cx="1" cy="8" r="0.7" fill="#a5a9b0"/></svg>
<svg class="a" style="left:735px;top:556px" width="5" height="11" viewBox="0 0 5 11"><path d="M2.5 0 V9.5" stroke="#2b2f36" stroke-width="1.2"/><path d="M0.3 7 L2.5 10.5 L4.7 7" fill="none" stroke="#2b2f36" stroke-width="1.1"/></svg>
<svg class="a" style="left:828px;top:556px" width="5" height="11" viewBox="0 0 5 11"><path d="M2.5 1 V10" stroke="#9ea3aa" stroke-width="1"/><path d="M0.6 2.6 L2.5 0.5 L4.4 2.6 M0.6 8.4 L2.5 10.5 L4.4 8.4" fill="none" stroke="#9ea3aa" stroke-width="0.9"/></svg>
<svg class="a" style="left:213px;top:574.2px" width="8" height="5" viewBox="0 0 8 5"><path d="M0.7 0.7 L4 4 L7.3 0.7" fill="none" stroke="#9ea3aa" stroke-width="1"/></svg>
<svg class="a" style="left:233.3px;top:573.4000000000001px" width="9.2" height="8" viewBox="0 0 10 9"><path d="M0 1 Q0 0 1 0 H3.6 L4.6 1.2 H9 Q10 1.2 10 2.2 V8 Q10 9 9 9 H1 Q0 9 0 8 Z" fill="#5ea8d6"/></svg>
<div class="a" style="left:257px;top:571.4000000000001px;width:41px;height:13px;border:1px solid #e2e4e8;border-radius:2.5px;background:#f8f9fa;font-size:9.2px;line-height:11px;text-align:center;color:#3a3e45">os.host</div>
<div class="a" style="left:311px;top:569.7px;line-height:13px;font-size:10px;color:#3a3e45">7<span style="font-size:7.6px;color:#8f949b">distinct values</span></div>
<div class="a" style="left:410px;top:569.7px;line-height:13px;font-size:10px;color:#3a3e45">7<span style="font-size:7.6px;color:#8f949b">distinct values</span></div>
<div class="a" style="left:510px;top:569.7px;line-height:13px;font-size:10px;color:#3a3e45">7<span style="font-size:7.6px;color:#8f949b">distinct values</span></div>
<div class="a" style="left:610px;top:569.7px;line-height:13px;font-size:10px;color:#3a3e45">7<span style="font-size:7.6px;color:#8f949b">distinct values</span></div>
<div class="a" style="left:690px;width:41.5px;text-align:right;top:570.2px;line-height:13px;font-size:9.4px;color:#3a3e45">3.5%</div>
<div class="a" style="left:735px;top:570.4000000000001px;width:64px;height:11.5px;border-radius:3px;background:#e3dff6"></div>
<div class="a" style="left:735px;top:570.4000000000001px;width:8.5px;height:11.5px;border-radius:3px;background:#8b63d5;border-left:1.5px solid #5a3aa0"></div>
<div class="a" style="left:759.8px;top:570.9000000000001px;width:1px;height:10.5px;background:#8a8e96"></div>
<div class="a" style="left:700px;width:198.5px;text-align:right;top:570.2px;line-height:13px;font-size:9.6px;color:#3a3e45"><span style="font-size:8px;color:#8f949b"></span>1.4 GB<span style="font-size:6.6px;color:#50545b;-webkit-text-stroke:0.2px #50545b">(30.5 MB &nbsp;-&nbsp; 3.5 GB)</span></div>
<div class="a" style="left:907px;top:569.7px;line-height:13px;font-size:10px;color:#3a3e45">7<span style="font-size:7.6px;color:#8f949b">distinct values</span></div>
<svg class="a" style="left:232.5px;top:587.7px" width="5" height="8" viewBox="0 0 5 8"><path d="M0.7 0.7 L4 4 L0.7 7.3" fill="none" stroke="#a8adb4" stroke-width="1"/></svg>
<div class="a" style="left:244px;width:60px;text-align:center;top:584.7px;line-height:13px;font-size:10px;color:#3a3e45">java</div>
<div class="a" style="left:311px;top:584.7px;line-height:13px;font-size:10px;color:#3a3e45">7923</div>
<div class="a" style="left:410.5px;top:584.7px;line-height:13px;font-size:9.6px;color:#3a3e45">/usr/lib/jdk1.8.0_18...</div>
<div class="a" style="left:610px;top:584.7px;line-height:13px;font-size:10px;color:#3a3e45">ip-10-1-3-218.ec2....</div>
<div class="a" style="left:709.5px;top:584.7px;line-height:13px;font-size:9.5px;color:#3a3e45">...</div>
<div class="a" style="left:735px;top:584.9000000000001px;width:64px;height:11.5px;border-radius:3px;background:#e4f4fc"></div>
<div class="a" style="left:735px;top:584.9000000000001px;width:25.5px;height:11.5px;border-radius:3px;background:#8fd2f3"></div>
<div class="a" style="left:798px;width:100.5px;text-align:right;top:584.7px;line-height:13px;font-size:9.6px;color:#3a3e45">1.8 GB</div>
<div class="a" style="left:908px;top:584.7px;line-height:13px;font-size:9.9px;color:#3a3e45">2019-05-23 05:41:...</div>
<svg class="a" style="left:232.5px;top:602.2px" width="5" height="8" viewBox="0 0 5 8"><path d="M0.7 0.7 L4 4 L0.7 7.3" fill="none" stroke="#a8adb4" stroke-width="1"/></svg>
<div class="a" style="left:244px;width:60px;text-align:center;top:599.2px;line-height:13px;font-size:10px;color:#3a3e45">java</div>
<div class="a" style="left:311px;top:599.2px;line-height:13px;font-size:10px;color:#3a3e45">23541</div>
<div class="a" style="left:410.5px;top:599.2px;line-height:13px;font-size:9.6px;color:#3a3e45">/usr/lib/jdk1.8.0_18...</div>
<div class="a" style="left:610px;top:599.2px;line-height:13px;font-size:10px;color:#3a3e45">ip-10-1-3-218.ec2....</div>
<div class="a" style="left:709.5px;top:599.2px;line-height:13px;font-size:9.5px;color:#3a3e45">...</div>
<div class="a" style="left:735px;top:599.4000000000001px;width:64px;height:11.5px;border-radius:3px;background:#e4f4fc"></div>
<div class="a" style="left:735px;top:599.4000000000001px;width:19.7px;height:11.5px;border-radius:3px;background:#8fd2f3"></div>
<div class="a" style="left:798px;width:100.5px;text-align:right;top:599.2px;line-height:13px;font-size:9.6px;color:#3a3e45">2.2 GB</div>
<div class="a" style="left:908px;top:599.2px;line-height:13px;font-size:9.9px;color:#3a3e45">2019-05-23 12:46:...</div>
<svg class="a" style="left:232.5px;top:616.7px" width="5" height="8" viewBox="0 0 5 8"><path d="M0.7 0.7 L4 4 L0.7 7.3" fill="none" stroke="#a8adb4" stroke-width="1"/></svg>
<div class="a" style="left:244px;width:60px;text-align:center;top:613.7px;line-height:13px;font-size:10px;color:#3a3e45">java</div>
<div class="a" style="left:311px;top:613.7px;line-height:13px;font-size:10px;color:#3a3e45">1649</div>
<div class="a" style="left:410.5px;top:613.7px;line-height:13px;font-size:9.6px;color:#3a3e45">/usr/lib/jdk1.8.0_18...</div>
<div class="a" style="left:610px;top:613.7px;line-height:13px;font-size:10px;color:#3a3e45">ip-10-1-3-218.ec2....</div>
<div class="a" style="left:709.5px;top:613.7px;line-height:13px;font-size:9.5px;color:#3a3e45">1...</div>
<div class="a" style="left:735px;top:613.9000000000001px;width:64px;height:11.5px;border-radius:3px;background:#e4f4fc"></div>
<div class="a" style="left:735px;top:613.9000000000001px;width:9px;height:11.5px;border-radius:3px;background:#8fd2f3"></div>
<div class="a" style="left:798px;width:100.5px;text-align:right;top:613.7px;line-height:13px;font-size:9.6px;color:#3a3e45">3.5 GB</div>
<div class="a" style="left:908px;top:613.7px;line-height:13px;font-size:9.9px;color:#3a3e45">2019-05-29 09:59...</div>
<svg class="a" style="left:232.5px;top:631.2px" width="5" height="8" viewBox="0 0 5 8"><path d="M0.7 0.7 L4 4 L0.7 7.3" fill="none" stroke="#a8adb4" stroke-width="1"/></svg>
<div class="a" style="left:244px;width:60px;text-align:center;top:628.2px;line-height:13px;font-size:10px;color:#3a3e45">kub...</div>
<div class="a" style="left:311px;top:628.2px;line-height:13px;font-size:10px;color:#3a3e45">4215</div>
<div class="a" style="left:410.5px;top:628.2px;line-height:13px;font-size:9.6px;color:#3a3e45">/usr/local/bin/kub...</div>
<div class="a" style="left:509.7px;top:628.2px;line-height:13px;font-size:10px;color:#3a3e45">root</div>
<div class="a" style="left:610px;top:628.2px;line-height:13px;font-size:10px;color:#3a3e45">ip-10-1-3-218.ec2....</div>
<div class="a" style="left:709.5px;top:628.2px;line-height:13px;font-size:9.5px;color:#3a3e45">4...</div>
<div class="a" style="left:735px;top:628.4000000000001px;width:64px;height:11.5px;border-radius:3px;background:#e4f4fc"></div>
<div class="a" style="left:735px;top:628.4000000000001px;width:3.2px;height:11.5px;border-radius:3px;background:#8fd2f3"></div>
<div class="a" style="left:798px;width:100.5px;text-align:right;top:628.2px;line-height:13px;font-size:9.6px;color:#3a3e45">124.3 MB</div>
<div class="a" style="left:908px;top:628.2px;line-height:13px;font-size:9.9px;color:#3a3e45">2019-05-16 10:52:...</div>
<svg class="a" style="left:232.5px;top:645.7px" width="5" height="8" viewBox="0 0 5 8"><path d="M0.7 0.7 L4 4 L0.7 7.3" fill="none" stroke="#a8adb4" stroke-width="1"/></svg>
<div class="a" style="left:244px;width:60px;text-align:center;top:642.7px;line-height:13px;font-size:10px;color:#3a3e45">java</div>
<div class="a" style="left:311px;top:642.7px;line-height:13px;font-size:10px;color:#3a3e45">28255</div>
<div class="a" style="left:410.5px;top:642.7px;line-height:13px;font-size:9.6px;color:#3a3e45">/usr/lib/jdk1.8.0_18...</div>
<div class="a" style="left:610px;top:642.7px;line-height:13px;font-size:10px;color:#3a3e45">ip-10-1-3-218.ec2....</div>
<div class="a" style="left:709.5px;top:642.7px;line-height:13px;font-size:9.5px;color:#3a3e45">...</div>
<div class="a" style="left:735px;top:642.9000000000001px;width:64px;height:11.5px;border-radius:3px;background:#e4f4fc"></div>
<div class="a" style="left:735px;top:642.9000000000001px;width:1.5px;height:11.5px;border-radius:3px;background:#8fd2f3"></div>
<div class="a" style="left:798px;width:100.5px;text-align:right;top:642.7px;line-height:13px;font-size:9.6px;color:#3a3e45">1.8 GB</div>
<div class="a" style="left:908px;top:642.7px;line-height:13px;font-size:9.9px;color:#3a3e45">2019-05-23 05:40...</div>
<svg class="a" style="left:232.5px;top:660.2px" width="5" height="8" viewBox="0 0 5 8"><path d="M0.7 0.7 L4 4 L0.7 7.3" fill="none" stroke="#a8adb4" stroke-width="1"/></svg>
<div class="a" style="left:244px;width:60px;text-align:center;top:657.2px;line-height:13px;font-size:10px;color:#3a3e45">doc...</div>
<div class="a" style="left:311px;top:657.2px;line-height:13px;font-size:10px;color:#3a3e45">3925</div>
<div class="a" style="left:410.5px;top:657.2px;line-height:13px;font-size:9.6px;color:#3a3e45">/usr/bin/dockerd -...</div>
<div class="a" style="left:509.7px;top:657.2px;line-height:13px;font-size:10px;color:#3a3e45">root</div>
<div class="a" style="left:610px;top:657.2px;line-height:13px;font-size:10px;color:#3a3e45">ip-10-1-3-218.ec2....</div>
<div class="a" style="left:709.5px;top:657.2px;line-height:13px;font-size:9.5px;color:#3a3e45">1...</div>
<div class="a" style="left:735px;top:657.4000000000001px;width:64px;height:11.5px;border-radius:3px;background:#e4f4fc"></div>
<div class="a" style="left:735px;top:657.4000000000001px;width:1.5px;height:11.5px;border-radius:3px;background:#8fd2f3"></div>
<div class="a" style="left:798px;width:100.5px;text-align:right;top:657.2px;line-height:13px;font-size:9.6px;color:#3a3e45">114.3 MB</div>
<div class="a" style="left:908px;top:657.2px;line-height:13px;font-size:9.9px;color:#3a3e45">2019-05-16 10:51:...</div>
<svg class="a" style="left:232.5px;top:674.7px" width="5" height="8" viewBox="0 0 5 8"><path d="M0.7 0.7 L4 4 L0.7 7.3" fill="none" stroke="#a8adb4" stroke-width="1"/></svg>
<div class="a" style="left:244px;width:60px;text-align:center;top:671.7px;line-height:13px;font-size:10px;color:#3a3e45">trace...</div>
<div class="a" style="left:311px;top:671.7px;line-height:13px;font-size:10px;color:#3a3e45">8464</div>
<div class="a" style="left:410.5px;top:671.7px;line-height:13px;font-size:9.6px;color:#3a3e45">/opt/trace-consu...</div>
<div class="a" style="left:509.7px;top:671.7px;line-height:13px;font-size:10px;color:#3a3e45">_apt</div>
<div class="a" style="left:610px;top:671.7px;line-height:13px;font-size:10px;color:#3a3e45">ip-10-1-3-218.ec2....</div>
<div class="a" style="left:709.5px;top:671.7px;line-height:13px;font-size:9.5px;color:#3a3e45">1...</div>
<div class="a" style="left:735px;top:671.9000000000001px;width:64px;height:11.5px;border-radius:3px;background:#e4f4fc"></div>
<div class="a" style="left:735px;top:671.9000000000001px;width:1.5px;height:11.5px;border-radius:3px;background:#8fd2f3"></div>
<div class="a" style="left:798px;width:100.5px;text-align:right;top:671.7px;line-height:13px;font-size:9.6px;color:#3a3e45">30.5 MB</div>
<div class="a" style="left:908px;top:671.7px;line-height:13px;font-size:9.9px;color:#3a3e45">2019-05-24 14:34:...</div>
<svg class="a" style="left:216px;top:689.2px" width="5" height="8" viewBox="0 0 5 8"><path d="M0.7 0.7 L4 4 L0.7 7.3" fill="none" stroke="#9ea3aa" stroke-width="1"/></svg>
<svg class="a" style="left:233.3px;top:689.4000000000001px" width="9.2" height="8" viewBox="0 0 10 9"><path d="M0 1 Q0 0 1 0 H3.6 L4.6 1.2 H9 Q10 1.2 10 2.2 V8 Q10 9 9 9 H1 Q0 9 0 8 Z" fill="#5ea8d6"/></svg>
<div class="a" style="left:257px;top:687.4000000000001px;width:41px;height:13px;border:1px solid #e2e4e8;border-radius:2.5px;background:#f8f9fa;font-size:9.2px;line-height:11px;text-align:center;color:#3a3e45">os.host</div>
<div class="a" style="left:311px;top:685.7px;line-height:13px;font-size:10px;color:#3a3e45">7<span style="font-size:7.6px;color:#8f949b">distinct values</span></div>
<div class="a" style="left:410px;top:685.7px;line-height:13px;font-size:10px;color:#3a3e45">7<span style="font-size:7.6px;color:#8f949b">distinct values</span></div>
<div class="a" style="left:510px;top:685.7px;line-height:13px;font-size:10px;color:#3a3e45">7<span style="font-size:7.6px;color:#8f949b">distinct values</span></div>
<div class="a" style="left:610px;top:685.7px;line-height:13px;font-size:10px;color:#3a3e45">7<span style="font-size:7.6px;color:#8f949b">distinct values</span></div>
<div class="a" style="left:690px;width:41.5px;text-align:right;top:686.2px;line-height:13px;font-size:9.4px;color:#3a3e45">3.3%</div>
<div class="a" style="left:735px;top:686.4000000000001px;width:64px;height:11.5px;border-radius:3px;background:#e3dff6"></div>
<div class="a" style="left:735px;top:686.4000000000001px;width:8.5px;height:11.5px;border-radius:3px;background:#8b63d5;border-left:1.5px solid #5a3aa0"></div>
<div class="a" style="left:759.8px;top:686.9000000000001px;width:1px;height:10.5px;background:#8a8e96"></div>
<div class="a" style="left:700px;width:198.5px;text-align:right;top:686.2px;line-height:13px;font-size:9.6px;color:#3a3e45"><span style="font-size:8px;color:#8f949b">vg</span>1.1 GB<span style="font-size:6.6px;color:#50545b;-webkit-text-stroke:0.2px #50545b">(20 KB &nbsp;-&nbsp; 3.4 GB)</span></div>
<div class="a" style="left:907px;top:685.7px;line-height:13px;font-size:10px;color:#3a3e45">7<span style="font-size:7.6px;color:#8f949b">distinct values</span></div>
<svg class="a" style="left:216px;top:703.7px" width="5" height="8" viewBox="0 0 5 8"><path d="M0.7 0.7 L4 4 L0.7 7.3" fill="none" stroke="#9ea3aa" stroke-width="1"/></svg>
<svg class="a" style="left:233.3px;top:703.9000000000001px" width="9.2" height="8" viewBox="0 0 10 9"><path d="M0 1 Q0 0 1 0 H3.6 L4.6 1.2 H9 Q10 1.2 10 2.2 V8 Q10 9 9 9 H1 Q0 9 0 8 Z" fill="#5ea8d6"/></svg>
<div class="a" style="left:257px;top:701.9000000000001px;width:41px;height:13px;border:1px solid #e2e4e8;border-radius:2.5px;background:#f8f9fa;font-size:9.2px;line-height:11px;text-align:center;color:#3a3e45">os.host</div>
<div class="a" style="left:311px;top:700.2px;line-height:13px;font-size:10px;color:#3a3e45">7<span style="font-size:7.6px;color:#8f949b">distinct values</span></div>
<div class="a" style="left:410px;top:700.2px;line-height:13px;font-size:10px;color:#3a3e45">7<span style="font-size:7.6px;color:#8f949b">distinct values</span></div>
<div class="a" style="left:510px;top:700.2px;line-height:13px;font-size:10px;color:#3a3e45">7<span style="font-size:7.6px;color:#8f949b">distinct values</span></div>
<div class="a" style="left:610px;top:700.2px;line-height:13px;font-size:10px;color:#3a3e45">7<span style="font-size:7.6px;color:#8f949b">distinct values</span></div>
<div class="a" style="left:690px;width:41.5px;text-align:right;top:700.7px;line-height:13px;font-size:9.4px;color:#3a3e45">2.0%</div>
<div class="a" style="left:735px;top:700.9000000000001px;width:64px;height:11.5px;border-radius:3px;background:#e3dff6"></div>
<div class="a" style="left:735px;top:700.9000000000001px;width:8px;height:11.5px;border-radius:3px;background:#8b63d5;border-left:1.5px solid #5a3aa0"></div>
<div class="a" style="left:754.5px;top:701.4000000000001px;width:1px;height:10.5px;background:#8a8e96"></div>
<div class="a" style="left:700px;width:198.5px;text-align:right;top:700.7px;line-height:13px;font-size:9.6px;color:#3a3e45"><span style="font-size:8px;color:#8f949b"></span>2.1 GB<span style="font-size:6.6px;color:#50545b;-webkit-text-stroke:0.2px #50545b">(97.2 MB &nbsp;-&nbsp; 8.5 GB)</span></div>
<div class="a" style="left:907px;top:700.2px;line-height:13px;font-size:10px;color:#3a3e45">7<span style="font-size:7.6px;color:#8f949b">distinct values</span></div>
<svg class="a" style="left:216px;top:718.2px" width="5" height="8" viewBox="0 0 5 8"><path d="M0.7 0.7 L4 4 L0.7 7.3" fill="none" stroke="#9ea3aa" stroke-width="1"/></svg>
<svg class="a" style="left:233.3px;top:718.4000000000001px" width="9.2" height="8" viewBox="0 0 10 9"><path d="M0 1 Q0 0 1 0 H3.6 L4.6 1.2 H9 Q10 1.2 10 2.2 V8 Q10 9 9 9 H1 Q0 9 0 8 Z" fill="#5ea8d6"/></svg>
<div class="a" style="left:257px;top:716.4000000000001px;width:41px;height:13px;border:1px solid #e2e4e8;border-radius:2.5px;background:#f8f9fa;font-size:9.2px;line-height:11px;text-align:center;color:#3a3e45">os.host</div>
<div class="a" style="left:311px;top:714.7px;line-height:13px;font-size:10px;color:#3a3e45">7<span style="font-size:7.6px;color:#8f949b">distinct values</span></div>
<div class="a" style="left:410px;top:714.7px;line-height:13px;font-size:10px;color:#3a3e45">7<span style="font-size:7.6px;color:#8f949b">distinct values</span></div>
<div class="a" style="left:510px;top:714.7px;line-height:13px;font-size:10px;color:#3a3e45">7<span style="font-size:7.6px;color:#8f949b">distinct values</span></div>
<div class="a" style="left:610px;top:714.7px;line-height:13px;font-size:10px;color:#3a3e45">7<span style="font-size:7.6px;color:#8f949b">distinct values</span></div>
<div class="a" style="left:690px;width:41.5px;text-align:right;top:715.2px;line-height:13px;font-size:9.4px;color:#3a3e45">2.0%</div>
<div class="a" style="left:735px;top:715.4000000000001px;width:64px;height:11.5px;border-radius:3px;background:#e3dff6"></div>
<div class="a" style="left:735px;top:715.4000000000001px;width:6px;height:11.5px;border-radius:3px;background:#8b63d5;border-left:1.5px solid #5a3aa0"></div>
<div class="a" style="left:754.5px;top:715.9000000000001px;width:1px;height:10.5px;background:#8a8e96"></div>
<div class="a" style="left:700px;width:198.5px;text-align:right;top:715.2px;line-height:13px;font-size:9.6px;color:#3a3e45"><span style="font-size:8px;color:#8f949b"></span>1.8 MB<span style="font-size:6.6px;color:#50545b;-webkit-text-stroke:0.2px #50545b">(30.0 MB &nbsp;-&nbsp; 8.0 GB)</span></div>
<div class="a" style="left:907px;top:714.7px;line-height:13px;font-size:10px;color:#3a3e45">7<span style="font-size:7.6px;color:#8f949b">distinct values</span></div>
<div class="a" style="left:219.4px;top:585px;width:1px;height:100px;background:#e2e4e8"></div>
<div class="a" style="left:1006px;top:570px;width:7px;height:150px;background:#b8b9bb"></div>
<div class="a" style="left:1021px;top:122px;width:3px;height:513px;background:#cdd0d6"></div>
</body></html>
